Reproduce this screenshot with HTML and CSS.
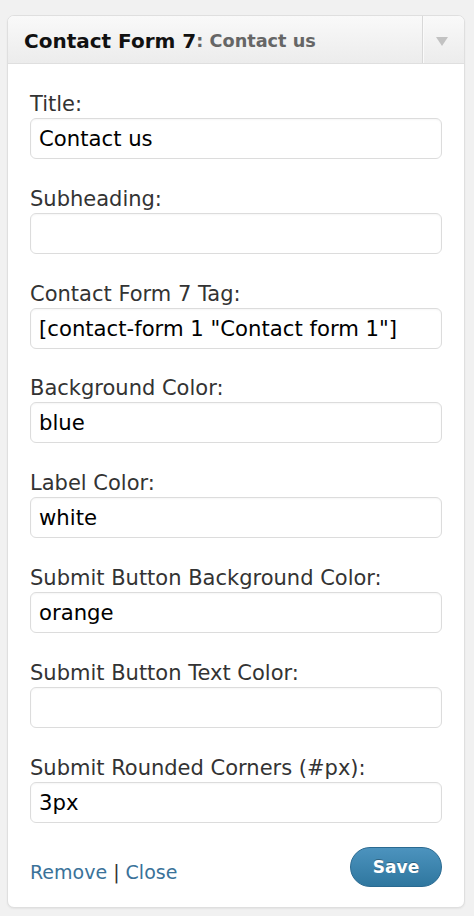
FILE: index.html
```html
<!DOCTYPE html>
<html lang="en">
<head>
<meta charset="utf-8">
<title>Contact Form 7 widget</title>
<link rel="stylesheet" href="styles.css">
</head>
<body>
<div class="widget">
  <div class="widget-top">
    <div class="widget-title"><span class="name">Contact Form 7</span><span class="in-title">: Contact us</span></div>
    <div class="widget-action"><span class="arrow"></span></div>
  </div>
  <div class="widget-inside">
    <div class="field"><label>Title:</label><input type="text" value="Contact us"></div>
    <div class="field"><label>Subheading:</label><input type="text" value=""></div>
    <div class="field"><label>Contact Form 7 Tag:</label><input type="text" value="[contact-form 1 &quot;Contact form 1&quot;]"></div>
    <div class="field"><label>Background Color:</label><input type="text" value="blue"></div>
    <div class="field"><label>Label Color:</label><input type="text" value="white"></div>
    <div class="field"><label>Submit Button Background Color:</label><input type="text" value="orange"></div>
    <div class="field"><label>Submit Button Text Color:</label><input type="text" value=""></div>
    <div class="field"><label>Submit Rounded Corners (#px):</label><input type="text" value="3px"></div>
    <div class="widget-control">
      <div class="links"><a href="#">Remove</a> | <a href="#">Close</a></div>
      <button class="save" type="button">Save</button>
    </div>
  </div>
</div>
</body>
</html>
```

FILE: styles.css
```css
html, body {
  margin: 0;
  padding: 0;
  background: #f1f1f1;
  font-family: "DejaVu Sans", Verdana, sans-serif;
}
body {
  padding: 15px 9px 9px 7px;
}
.widget {
  width: 456px;
  border: 1px solid #dfdfdf;
  border-radius: 7px;
  background: #fff;
  box-shadow: 0 1px 2px rgba(0,0,0,0.06);
  overflow: hidden;
}
.widget-top {
  display: flex;
  height: 47px;
  background: linear-gradient(#f9f9f9, #ececec);
  border-bottom: 1px solid #dfdfdf;
}
.widget-title {
  flex: 1;
  display: flex;
  align-items: center;
  padding-left: 16px;
  padding-top: 2px;
  font-weight: bold;
  white-space: nowrap;
}
.widget-title .name {
  font-size: 20px;
  color: #111;
}
.widget-title .in-title {
  font-size: 17.7px;
  color: #666;
}
.widget-action {
  width: 41px;
  border-left: 1px solid #d8d8d8;
  box-shadow: inset 1px 0 0 #fafafa;
  display: flex;
  align-items: center;
  justify-content: center;
}
.arrow {
  width: 0;
  height: 0;
  border-left: 6px solid transparent;
  border-right: 6px solid transparent;
  border-top: 9px solid #c2c2c2;
  margin-top: 3px;
  margin-right: 3px;
}
.widget-inside {
  padding: 28px 22px 20px 22px;
}
.field {
  margin-bottom: 27.8px;
}
.field label {
  display: block;
  font-size: 21px;
  line-height: 24px;
  color: #333;
  margin-bottom: 2px;
}
.field input {
  display: block;
  box-sizing: border-box;
  width: 412px;
  height: 41px;
  margin: 0;
  padding: 0 8px;
  border: 1px solid #dcdcdc;
  border-radius: 6px;
  background: #fff;
  box-shadow: inset 0 1px 2px rgba(0,0,0,0.04);
  font-family: "DejaVu Sans", Verdana, sans-serif;
  font-size: 21.2px;
  color: #000;
  outline: none;
}
.widget-control {
  display: flex;
  align-items: center;
  justify-content: space-between;
  margin-top: -3px;
}
.links {
  font-size: 19px;
  color: #333;
  padding-top: 9px;
}
.links a {
  color: #3a7299;
  text-decoration: none;
}
.save {
  width: 92px;
  height: 40px;
  border: 1px solid #2a6a91;
  border-radius: 20px;
  background: linear-gradient(#4c93be, #2f779f);
  color: #fff;
  font-family: "DejaVu Sans", Verdana, sans-serif;
  font-weight: bold;
  font-size: 17px;
  text-shadow: 0 -1px 0 rgba(0,0,0,0.3);
  padding: 0;
}
```
